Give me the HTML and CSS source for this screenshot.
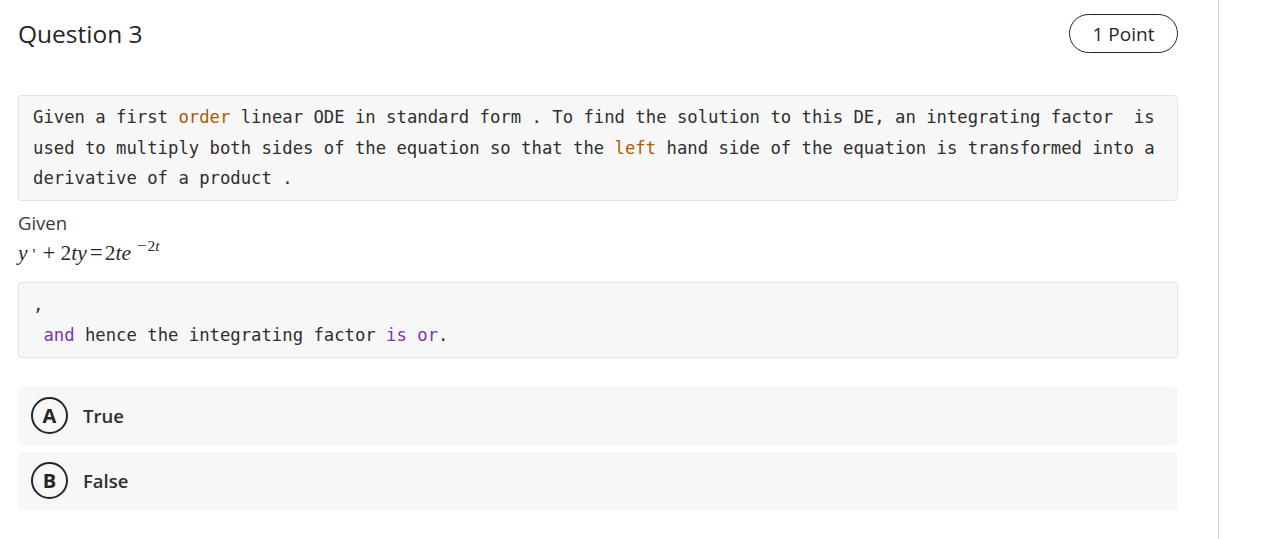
FILE: index.html
```html
<!DOCTYPE html>
<html>
<head>
<meta charset="utf-8">
<link rel="stylesheet" href="styles.css">
</head>
<body>
<div class="page">
  <main class="main">
    <header class="head">
      <h1 class="title">Question 3</h1>
      <span class="badge">1 Point</span>
    </header>

    <div class="code code-first">Given a first <span class="kw-o">order</span> linear ODE in standard form . To find the solution to this DE, an integrating factor  is
used to multiply both sides of the equation so that the <span class="kw-o">left</span> hand side of the equation is transformed into a
derivative of a product .</div>

    <p class="given">Given</p>
    <div class="eq"><span class="mi">y</span><span class="prime">'</span><span class="mo">+</span><span class="mn">2</span><span class="mi">ty</span><span class="mo eqs">=</span><span class="mn">2</span><span class="mi">te</span><sup class="sup"><span class="mo">−</span>2<span class="mi">t</span></sup></div>

    <div class="code code-second">,
 <span class="kw-p">and</span> hence the integrating factor <span class="kw-p">is</span> <span class="kw-p">or</span>.</div>

    <div class="options">
      <div class="option"><span class="letter">A</span><span class="label">True</span></div>
      <div class="option"><span class="letter">B</span><span class="label">False</span></div>
    </div>
  </main>
  <aside class="side"></aside>
</div>
</body>
</html>
```

FILE: styles.css
```css
html, body {
  margin: 0;
  padding: 0;
  background: #ffffff;
}
body {
  font-family: "Open Sans", "Noto Sans", sans-serif;
  color: #262626;
}
.page {
  display: flex;
  min-height: 539px;
}
.main {
  width: 1160px;
  padding: 0 40px 0 18px;
  border-right: 1px solid #cfcfcf;
  box-sizing: content-box;
}
.side {
  flex: 1;
}
.head {
  display: flex;
  justify-content: space-between;
  align-items: center;
  padding-top: 14px;
  height: 39px;
}
.title {
  margin: 0;
  font-size: 24.5px;
  font-weight: 400;
  color: #262626;
  line-height: 30px;
  margin-top: 1px;
}
.badge {
  box-sizing: border-box;
  height: 39px;
  width: 109px;
  border: 1px solid #262626;
  border-radius: 20px;
  display: flex;
  align-items: center;
  justify-content: center;
  font-size: 19px;
  color: #262626;
}
.code {
  white-space: pre;
  font-family: "DejaVu Sans Mono", "Liberation Mono", monospace;
  font-size: 17.25px;
  line-height: 30.5px;
  color: #2e2e2e;
  background: #f7f7f7;
  border: 1px solid #e4e4e4;
  border-radius: 3px;
  padding: 6px 14px 6px;
}
.code-first {
  margin-top: 42px;
}
.code-second {
  margin-top: 12px;
  padding: 7px 14px 6px;
}
.kw-o {
  color: #b05a00;
}
.kw-p {
  color: #7f33ad;
}
.given {
  margin: 10px 0 0;
  font-size: 18.5px;
  line-height: 24px;
  color: #3a3a3a;
}
.eq {
  font-family: "Liberation Serif", "Times New Roman", serif;
  font-size: 21.5px;
  line-height: 34px;
  height: 34px;
  color: #2b2b2b;
  padding-top: 1px;
}
.mi {
  font-style: italic;
}
.prime {
  margin: 0 4px 0 5px;
  font-size: 16px;
}
.mo {
  margin: 0 5px 0 3px;
  font-size: 23px;
}
.eqs {
  margin: 0 2px 0 3px;
}
.sup {
  font-size: 15.5px;
  vertical-align: 9px;
  line-height: 0;
  margin-left: 6px;
}
.sup .mo {
  margin: 0 1px 0 0;
  font-size: 17px;
}
.options {
  margin-top: 29px;
  display: flex;
  flex-direction: column;
  gap: 7px;
}
.option {
  height: 58px;
  background: #f7f7f7;
  border-radius: 4px;
  display: flex;
  align-items: center;
  padding-left: 13px;
}
.letter {
  box-sizing: border-box;
  width: 37px;
  height: 37px;
  border: 2px solid #262626;
  border-radius: 50%;
  display: flex;
  align-items: center;
  justify-content: center;
  font-size: 20px;
  font-weight: 700;
  color: #262626;
}
.label {
  margin-left: 15px;
  font-size: 18.5px;
  font-weight: 600;
  color: #2e2e2e;
}
```
